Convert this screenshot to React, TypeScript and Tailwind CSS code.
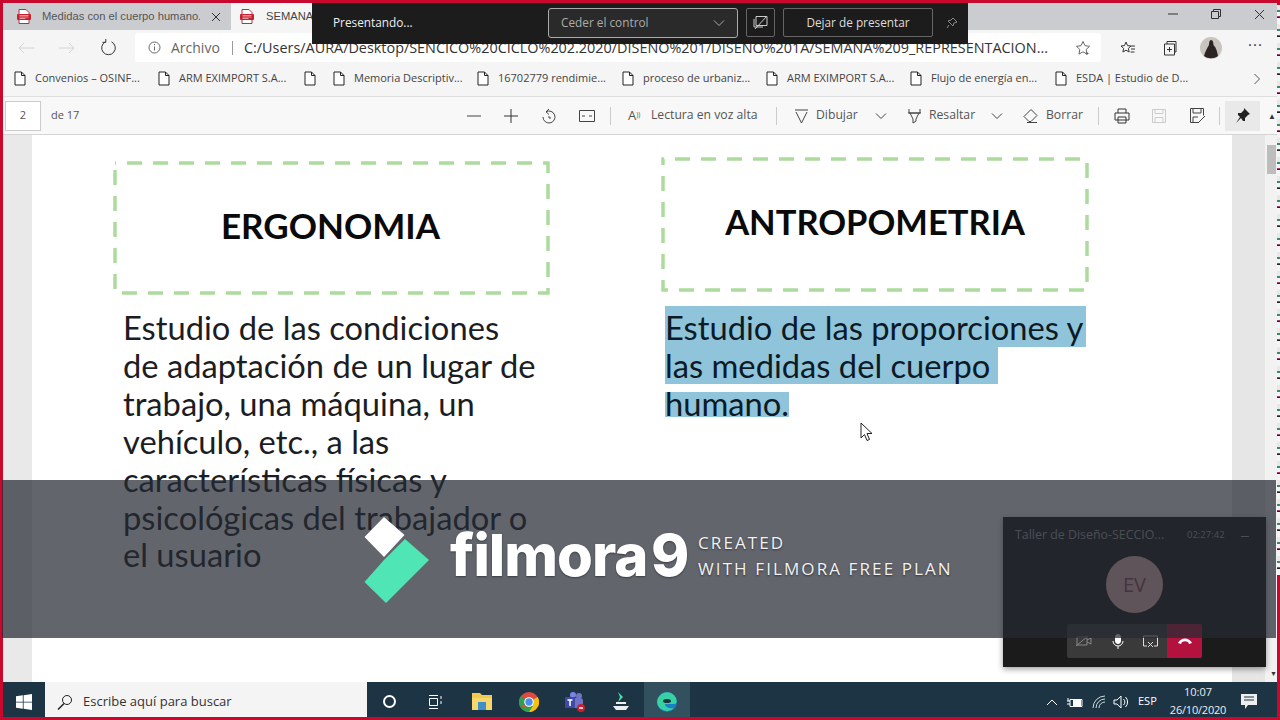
import React from "react";

const Pdf = () => (
  <svg width="14" height="15" viewBox="0 0 14 15" className="shrink-0">
    <path d="M2 .5h7l3 3v11H2z" fill="#fff" stroke="#b5303c" />
    <rect x="0" y="5" width="14" height="6" rx="1" fill="#c8202f" />
    <path d="M2.500 6.500h9M2.500 8h9M2.500 9.500h6" stroke="#f3c9cc" strokeWidth=".7" />
  </svg>
);
const Doc = () => (
  <svg width="12" height="15" viewBox="0 0 12 15" className="shrink-0">
    <path d="M1 1h6.500L11 4.500V14H1zM7.500 1v3.500H11" fill="#fff" stroke="#222" strokeWidth="1" />
  </svg>
);
const S = ({ w = 16, h = 16, children, c = "" }: { w?: number; h?: number; children: React.ReactNode; c?: string }) => (
  <svg width={w} height={h} viewBox={`0 0 ${w} ${h}`} fill="none" stroke="currentColor" strokeWidth="1" className={`shrink-0 ${c}`}>
    {children}
  </svg>
);
const Chev = ({ c = "text-[#555]" }: { c?: string }) => (
  <S w={12} h={8} c={c}><path d="M1 1.500l5 5 5-5" /></S>
);
const Bookmark = ({ t, w }: { t: string; w: string }) => (
  <div className={`flex items-center gap-[9px] shrink-0 ${w}`}>
    <Doc />
    <span className="text-[11px] text-[#444] whitespace-nowrap">{t}</span>
  </div>
);
const DashBox = ({ w, h, c, children }: { w: number; h: number; c: string; children: React.ReactNode }) => (
  <div className={`relative flex items-center justify-center shrink-0 ${c}`}>
    <svg width={w} height={h} viewBox={`0 0 ${w} ${h}`} className="absolute left-0 top-0">
      <rect x="2" y="2" width={w - 4} height={h - 4} fill="none" stroke="#acdb9d" strokeWidth="3.500" strokeDasharray="15 11" strokeDashoffset={-12} />
    </svg>
    {children}
  </div>
);

export default function App() {
  return (
    <div className="w-[1280px] h-[720px] overflow-hidden bg-[#c8082c] p-[3px_3px_3px_3px] font-['Open_Sans',sans-serif] relative">
      <div className="h-full flex flex-col bg-white relative overflow-hidden">
        {/* tab strip */}
        <div className="h-[27px] flex bg-[#cbccd0] shrink-0 text-[11.200px] font-['Liberation_Sans',sans-serif]">
          <div className="w-[228px] pl-[14px] pr-[5px] flex items-center text-[#555] whitespace-nowrap">
            <Pdf />
            <span className="ml-[11px] w-[158px] overflow-hidden">Medidas con el cuerpo humano.</span>
            <S w={10} h={10} c="text-[#333] ml-[11px]"><path d="M1 1l8 8M9 1l-8 8" /></S>
          </div>
          <div className="w-[81px] bg-[#f5f5f5] pl-[9px] flex items-center gap-[12px] text-[#444]">
            <Pdf />
            <span>SEMANA</span>
          </div>
          <div className="flex-1 flex items-center justify-end gap-[33px] pr-[12px] pb-[5px] text-[#333]">
            <S w={10} h={10}><path d="M0 5h10" /></S>
            <S w={10} h={10}><path d="M.5 2.500h7v7h-7zM2.500 2V.5h7v7H8" /></S>
            <S w={11} h={11}><path d="M1 1l9 9M10 1l-9 9" /></S>
          </div>
        </div>
        {/* address row */}
        <div className="h-[35px] flex items-center bg-[#f5f5f5] shrink-0">
          <S w={16} h={12} c="text-[#d4d4d4] ml-[15px]"><path d="M16 6H1M6 1L1 6l5 5" /></S>
          <S w={16} h={12} c="text-[#d4d4d4] ml-[25px]"><path d="M0 6h15M10 1l5 5-5 5" /></S>
          <S w={17} h={17} c="text-[#333] ml-[25px]"><path d="M5.500 2.800A6.800 6.800 0 1 0 11.500 2.800M5.800 0v3.300H2.500" /></S>
          <div className="w-[966px] h-[29px] ml-[18px] pl-[13px] bg-white rounded-[3px] flex items-center text-[#555] shrink-0">
            <S w={13} h={13} c="text-[#666]"><circle cx="6.500" cy="6.500" r="5.500" /><path d="M6.500 5.500v4M6.500 3v1.200" /></S>
            <span className="text-[14px] ml-[10px] w-[49px] text-[#666]">Archivo</span>
            <span className="w-px h-[14px] bg-[#999] ml-[12px] mr-[11px]" />
            <span className="text-[14.400px] text-[#333] whitespace-nowrap w-[805px]">C:/Users/AURA/Desktop/SENCICO%20CICLO%202.2020/DISEÑO%201/DISEÑO%201A/SEMANA%209_REPRESENTACION...</span>
            <S w={16} h={16} c="text-[#666] ml-[26px]"><path d="M8 1.500l2 4.200 4.500.6-3.300 3.200.8 4.600L8 11.800l-4 2.300.8-4.600L1.500 6.300 6 5.700zM12 12v3M10.500 13.500h3" /></S>
          </div>
          <div className="flex items-center shrink-0 text-[#333]">
            <S w={16} h={16} c="ml-[19px]"><path d="M6 2l1.500 3.600 3.500.4-2.600 2.400.7 3.600L6 10.200 2.900 12l.7-3.600L1 6l3.500-.4zM11 6h4M11 9h4M10.500 12h4" /></S>
            <S w={16} h={16} c="ml-[26px]"><path d="M2.500 4h10v11h-10zM5 4V1.500h9V12h-1.500M7.500 7v5M5 9.500h5" /></S>
            <svg width="22" height="22" viewBox="0 0 22 22" className="ml-[22px]">
              <circle cx="11" cy="11" r="11" fill="#c8c4be" />
              <path d="M11 3c2 0 2.500 3 2.500 5 3 3 4 8 4.500 11-4 3-10 3-14 0 1-4 3-8 5-11 0-2 .5-5 2-5z" fill="#2c2424" />
            </svg>
            <span className="ml-[26px] text-[15px] leading-none -translate-y-[3px] tracking-[1px]">···</span>
          </div>
        </div>
        {/* bookmarks */}
        <div className="h-[32px] flex items-center bg-[#f5f5f5] border-b border-[#dedede] shrink-0 pl-[11px] pr-[16px] pb-[4px]">
          <Bookmark t="Convenios – OSINF..." w="w-[144px]" />
          <Bookmark t="ARM EXIMPORT S.A..." w="w-[146px]" />
          <div className="w-[29px] shrink-0"><Doc /></div>
          <Bookmark t="Memoria Descriptiv..." w="w-[144px]" />
          <Bookmark t="16702779 rendimie..." w="w-[145px]" />
          <Bookmark t="proceso de urbaniz..." w="w-[144px]" />
          <Bookmark t="ARM EXIMPORT S.A..." w="w-[144px]" />
          <Bookmark t="Flujo de energía en..." w="w-[145px]" />
          <Bookmark t="ESDA | Estudio de D..." w="w-[145px]" />
          <div className="flex-1 flex justify-end"><S w={8} h={12} c="text-[#555]"><path d="M1.500 1l5 5-5 5" /></S></div>
        </div>
        {/* pdf toolbar */}
        <div className="h-[38px] flex items-center bg-[#f8f8f8] border-b border-[#d5d5d5] shrink-0 text-[12.200px] text-[#555] pl-[2px] whitespace-nowrap">
          <div className="w-[36px] h-[30px] bg-white border border-[#ccc] flex items-center justify-center text-[11px]">2</div>
          <span className="ml-[10px] text-[11px] w-[416px]">de 17</span>
          <S w={14} h={14} c="text-[#444]"><path d="M0 7h14" /></S>
          <S w={14} h={14} c="text-[#333] ml-[23px]"><path d="M0 7h14M7 0v14" /></S>
          <S w={16} h={16} c="text-[#444] ml-[23px]"><path d="M2 9a6 6 0 1 0 3-5.200M8 1L5 3.800 8 6.500M7 9h2v2" /></S>
          <S w={16} h={12} c="text-[#444] ml-[22px]"><path d="M.500.500h15v11H.500zM3 6h3M13 6h-3" /></S>
          <span className="w-px h-[18px] bg-[#ccc] ml-[15px]" />
          <span className="ml-[17px] w-[16px] text-[13px] text-[#555] leading-none">A<sup className="text-[7px]">))</sup></span>
          <span className="ml-[7px] w-[107px]">Lectura en voz alta</span>
          <span className="w-px h-[18px] bg-[#ccc] ml-[18px]" />
          <S w={15} h={16} c="text-[#444] ml-[17px]"><path d="M1 2h13M2 4l5.500 11L13 4" /></S>
          <span className="ml-[7px] w-[41px]">Dibujar</span>
          <Chev c="text-[#444] ml-[18px]" />
          <S w={15} h={16} c="text-[#444] ml-[20px]"><path d="M2 1v4h11V1M1 5h13M3 5l3 6v4l3-2v-2l3-6" /></S>
          <span className="ml-[7px] w-[45px]">Resaltar</span>
          <Chev c="text-[#444] ml-[17px]" />
          <S w={15} h={15} c="text-[#444] ml-[20px]"><path d="M1 8.500l7-7 6 6-6 6H6zM4 14.500h10" /></S>
          <span className="ml-[8px] w-[35px]">Borrar</span>
          <span className="w-px h-[18px] bg-[#ccc] ml-[17px]" />
          <S w={16} h={16} c="text-[#333] ml-[15px]"><path d="M4 5V1h8v4M1 5h14v7H1zM4 9h8v6H4z" /></S>
          <S w={14} h={14} c="text-[#ccc] ml-[22px]"><path d="M.500.500h13v13H.500zM3 .500v4h8v-4M3 13.500v-5h8v5" /></S>
          <S w={16} h={15} c="text-[#444] ml-[24px]"><path d="M.500.500h13v7M9 14.500H.500V.500M3 1v4h8V1M3 14V9h5M15 8l-6 6" /></S>
          <span className="w-px h-[18px] bg-[#ccc] ml-[13px]" />
          <div className="w-[35px] h-[30px] bg-[#e9e9e9] ml-[5px] flex items-center justify-center">
            <svg width="15" height="15" viewBox="0 0 15 15"><path d="M9 0l6 6-2 1-3 3 0 3-2 0-2-3-5 5 4-6-2-2 0-2 3 0 3-3z" fill="#222" /></svg>
          </div>
          <span className="ml-[8px] text-[#333] text-[8px]">▲</span>
        </div>
        {/* pdf area */}
        <div className="flex-1 flex min-h-0 bg-[#eeeeee] relative">
          <div className="w-[29px] shrink-0 bg-[#e9e9e9]" />
          <div className="w-[1200px] shrink-0 bg-white relative grid grid-cols-[628px_1fr] pt-[26px] font-['Lato',sans-serif]">
            <div className="pl-[81px] flex flex-col">
              <DashBox w={437} h={134} c="w-[437px] h-[134px]">
                <span className="font-bold text-[35px] leading-none text-[#0a0a0a] -translate-x-[1px] -translate-y-[3px]">ERGONOMIA</span>
              </DashBox>
              <div className="mt-[14px] ml-[10px] text-[32.700px] leading-[37.900px] text-[#1c1d22] whitespace-pre">{"Estudio de las condiciones\nde adaptación de un lugar de\ntrabajo, una máquina, un\nvehículo, etc., a las\ncaracterísticas físicas y\npsicológicas del trabajador o\nel usuario"}</div>
            </div>
            <div className="ml-[1px] flex flex-col -mt-[4px]">
              <DashBox w={428} h={135} c="w-[428px] h-[135px]">
                <span className="font-bold text-[34.500px] leading-none text-[#0a0a0a] -translate-y-[2px]">ANTROPOMETRIA</span>
              </DashBox>
              <div className="mt-[17px] ml-[4px] text-[32.700px] leading-[38px] text-[#0d1a25] whitespace-pre">
                <div className="h-[38px]"><span className="bg-[#8fc4da] shadow-[0_-3px_0_#8fc4da] inline-block w-[421px] h-[38px]">Estudio de las proporciones y</span></div>
                <div className="h-[38px]"><span className="bg-[#8fc4da] inline-block w-[333px] h-[37px]">las medidas del cuerpo</span></div>
                <div className="h-[38px]"><span className="bg-[linear-gradient(to_bottom,transparent_7px,#8fc4da_7px)] inline-block h-[32px]">humano.</span></div>
              </div>
            </div>
            {/* cursor */}
            <svg width="13" height="20" viewBox="0 0 13 20" className="absolute left-[828px] top-[287px]">
              <path d="M1 1v15l3.500-3.500 2.500 6 2.500-1-2.500-6h5z" fill="#fff" stroke="#222" />
            </svg>
          </div>
          <div className="w-[33px] shrink-0 bg-[#e6e6e6]" />
          <div className="flex-1 bg-[#f2f2f2] pl-[2px] flex flex-col justify-between pb-[5px]">
            <div className="w-[9px] h-[29px] bg-[#bdbdbd] mt-[10px]" />
            <div className="text-[#333] text-[7px] leading-none ml-[3px]">▼</div>
          </div>
        </div>
        {/* taskbar */}
        <div className="h-[35px] bg-[#1d3444] flex items-center shrink-0 text-white pt-[4px]">
          <div className="w-[42px] flex justify-center shrink-0">
            <svg width="16" height="16" viewBox="0 0 16 16" fill="#fff"><path d="M0 2.300l6.800-1v6.400H0zM7.600 1.200L16 0v7.700H7.600zM0 8.400h6.800v6.400l-6.800-1zM7.600 8.400H16V16l-8.400-1.200z" /></svg>
          </div>
          <div className="w-[322px] h-[35px] self-start -mt-[4px] pt-[4px] bg-[#f4f4f4] flex items-center pl-[12px] shrink-0 text-[#333]">
            <S w={16} h={16} c="text-[#222]"><circle cx="10" cy="6" r="4.500" /><path d="M7 9.500L1 15.500" strokeWidth="1.500" /></S>
            <span className="ml-[10px] text-[13px]">Escribe aquí para buscar</span>
          </div>
          <div className="w-[45px] flex justify-center shrink-0">
            <span className="w-[13px] h-[13px] rounded-full border-2 border-white" />
          </div>
          <div className="w-[46px] flex justify-center shrink-0">
            <S w={16} h={14} c="text-white"><path d="M2 .500h9M2 13.500h9M2.500 3.500h8v7h-8zM14 1v3M14 6v3" /></S>
          </div>
          <div className="w-[48px] flex justify-center shrink-0">
            <svg width="20" height="17" viewBox="0 0 20 17"><path d="M0 0h8l2 2h10v15H0z" fill="#f2c94c" /><rect x="0" y="5" width="20" height="12" fill="#f5d76e" /><rect x="6" y="9" width="8" height="8" fill="#3f8fc9" /></svg>
          </div>
          <div className="w-[46px] flex justify-center shrink-0">
            <svg width="20" height="20" viewBox="0 0 20 20">
              <circle cx="10" cy="10" r="10" fill="#dd4b3e" />
              <path d="M10 10L1.300 15A10 10 0 0 1 2 4z" fill="#2e9e4f" />
              <path d="M10 10l8.700-5A10 10 0 0 1 8 19.800z" fill="#f4c20d" />
              <path d="M1.300 15A10 10 0 0 0 10 20l4-6z" fill="#2e9e4f" />
              <circle cx="10" cy="10" r="4.800" fill="#fff" /><circle cx="10" cy="10" r="3.700" fill="#4a8ff0" />
            </svg>
          </div>
          <div className="w-[46px] flex justify-center shrink-0 relative">
            <svg width="22" height="22" viewBox="0 0 22 22">
              <circle cx="15" cy="5" r="3" fill="#6f74c9" /><circle cx="9" cy="4" r="3" fill="#7b83eb" />
              <rect x="7" y="7" width="12" height="10" rx="3" fill="#6f74c9" />
              <rect x="1" y="6" width="10" height="11" rx="1" fill="#3f49a8" />
              <path d="M3.500 9h5M6 9v6" stroke="#fff" strokeWidth="1.500" />
              <circle cx="17" cy="17" r="4" fill="#c8202f" /><path d="M15 17h4" stroke="#fff" strokeWidth="1.500" />
            </svg>
          </div>
          <div className="w-[46px] flex justify-center shrink-0">
            <svg width="16" height="20" viewBox="0 0 16 20">
              <path d="M5 0l5 5-5 5 2-5z" fill="#4fe0b0" />
              <path d="M3 11h10" stroke="#eee" strokeWidth="2" />
              <path d="M0 14h16l-3 4H3z" fill="#eee" />
            </svg>
          </div>
          <div className="w-[46px] h-[35px] self-start -mt-[4px] pt-[4px] bg-[#33505f] flex justify-center items-center shrink-0">
            <svg width="20" height="20" viewBox="0 0 20 20">
              <circle cx="10" cy="10" r="10" fill="#1b7fc4" />
              <path d="M0 10A10 10 0 0 1 19 6c1 3 1 5-1 6H8c0 3 4 5 9 4a10 10 0 0 1-17-6z" fill="#38d2a2" />
              <ellipse cx="10" cy="9" rx="4" ry="2" fill="#1d3444" />
            </svg>
          </div>
          <div className="flex-1 flex items-center text-[11px] pl-[356px]">
            <S w={12} h={8} c="text-white"><path d="M1 7l5-5 5 5" /></S>
            <S w={16} h={12} c="text-white ml-[9px]"><path d="M3 3.500h12v7H3z" /><path d="M6 4h8v6H6z" fill="currentColor" stroke="none" /><path d="M0 5h3M0 8h3M1 2v3" /></S>
            <S w={14} h={14} c="text-[#cdd] ml-[9px]"><path d="M1 13a12 12 0 0 1 12-12M4 13a9 9 0 0 1 9-9M7 13a6 6 0 0 1 6-6" /></S>
            <S w={15} h={14} c="text-white ml-[7px]"><path d="M1 5h3l4-4v12L4 9H1zM10.500 4a4 4 0 0 1 0 6M12.500 2a7 7 0 0 1 0 10" /></S>
            <span className="ml-[10px] w-[32px]">ESP</span>
            <div className="w-[56px] flex flex-col items-center leading-[17px] text-[#eee] text-[11px] -translate-y-[1px]">
              <span className="-translate-y-[1px]">10:07</span><span className="tracking-[-0.2px]">26/10/2020</span>
            </div>
            <svg width="16" height="15" viewBox="0 0 16 15" className="ml-[15px]"><path d="M0 0h16v11H7l-3 4v-4H0z" fill="#eee" /><path d="M3 3h10M3 6h10" stroke="#1d3444" /></svg>
          </div>
        </div>
      </div>

      {/* desktop bleed at right edge */}
      <div className="absolute right-0 top-[5px] w-[3px] h-[570px] bg-[repeating-linear-gradient(to_bottom,#e8e8e8_0,#e8e8e8_5px,#3c8a6e_5px,#3c8a6e_7px,#f4f4f4_7px,#f4f4f4_11px,#a83a7a_11px,#a83a7a_12px,#222_12px,#222_13px,#f4f4f4_13px,#f4f4f4_19px)]" />

      {/* Presenting bar */}
      <div className="absolute left-[312px] top-[3px] w-[656px] h-[41px] bg-[#1c1c1c] flex items-center text-white text-[11.800px] pb-[2px]">
        <span className="ml-[21px] w-[215px] text-[#eee]">Presentando...</span>
        <div className="w-[190px] h-[30px] border border-[#aaa] rounded-[3px] bg-[#2a2a2a] flex items-center justify-between pl-[12px] pr-[12px] text-[#aaa]">
          <span>Ceder el control</span><Chev c="text-[#aaa]" />
        </div>
        <div className="w-[29px] h-[29px] ml-[8px] border border-[#666] rounded-[2px] flex items-center justify-center text-[#ccc]">
          <S w={15} h={15}><path d="M3 1.500h11v9H3zM1 4v8h9M2 14L14 1" /></S>
        </div>
        <div className="w-[150px] h-[29px] ml-[8px] border border-[#666] rounded-[2px] flex items-center justify-center text-[#ddd]">Dejar de presentar</div>
        <S w={12} h={12} c="text-[#888] ml-[13px]"><path d="M7 1l4 4-3 1-1 3-5-5 3-1zM1 11l2-3" /></S>
      </div>

      {/* Teams call, sits under the banner */}
      <div className="absolute left-[1003px] top-[517px] w-[263px] h-[150px] bg-[#1b1b1b] shadow-[0_2px_6px_rgba(0,0,0,0.4)] text-[#aaaaaa]">
        <div className="absolute left-[12px] top-[9px] text-[12.400px] whitespace-nowrap">Taller de Diseño-SECCIO...</div>
        <div className="absolute left-[184px] top-[11px] text-[9.500px]">02:27:42</div>
        <div className="absolute left-[238px] top-[19px] w-[8px] h-px bg-[#aaaaaa]" />
        <div className="absolute left-[103px] top-[39px] w-[57px] h-[57px] rounded-full bg-[#f3c1b9] flex items-center justify-center text-[20px] text-[#964e5d]">EV</div>
        <div className="absolute left-[64px] top-[107px] w-[135px] h-[34px] rounded-[2px] bg-[#3a3a3a] flex items-center overflow-hidden text-white">
          <div className="w-[34px] flex justify-center"><S w={16} h={12} c="text-[#888]"><path d="M1 2h10v8H1zM11 5l4-2v6l-4-2M0 11L12 1" /></S></div>
          <div className="w-[33px] flex justify-center"><S w={12} h={15} c="text-white"><rect x="3.500" y="0.500" width="5" height="9" rx="2.500" fill="#fff" /><path d="M1 7a5 5 0 0 0 10 0M6 12v3" /></S></div>
          <div className="w-[33px] flex justify-center"><S w={15} h={13} c="text-[#ddd]"><path d="M4 11H.500V1h14v10H11M5 7l5 5M10 7l-5 5" /></S></div>
          <div className="flex-1 h-full bg-[#b3123f] flex items-center justify-center"><svg width="14" height="6" viewBox="0 0 14 6"><path d="M0 5c3-6 11-6 14 0l-3 1-1-2c-2-1-4-1-6 0L3 6z" fill="#fff" /></svg></div>
        </div>
      </div>

      {/* Filmora banner */}
      <div className="absolute left-[2px] top-[480px] w-[1274px] h-[158px] bg-[#252a33]/[0.72] pointer-events-none">
        <svg width="70" height="90" viewBox="0 0 70 90" className="absolute left-[361px] top-[36px]">
          <path d="M21 1L41.500 19 21 41 1.500 21z" fill="#fff" />
          <path d="M42 23L66 44 23 87 1.500 66 21 44z" fill="#4fe5b4" />
        </svg>
        <div className="absolute left-[448px] top-[39px] font-['Inter',sans-serif] font-extrabold text-[58px] leading-[72px] text-white tracking-[-1px] whitespace-nowrap [text-shadow:0_1px_2px_rgba(0,0,0,0.4)]">filmora</div>
        <div className="absolute left-[649px] top-[39px] font-['Inter',sans-serif] font-extrabold text-[58px] leading-[72px] text-white whitespace-nowrap [text-shadow:0_1px_2px_rgba(0,0,0,0.4)]">9</div>
        <div className="absolute left-[696px] top-[50px] text-[#f2f2f2] text-[17px] leading-[26px] tracking-[2.100px] whitespace-nowrap [text-shadow:0_1px_2px_rgba(0,0,0,0.5)]">
          CREATED<br />WITH FILMORA FREE PLAN
        </div>
      </div>
    </div>
  );
}
